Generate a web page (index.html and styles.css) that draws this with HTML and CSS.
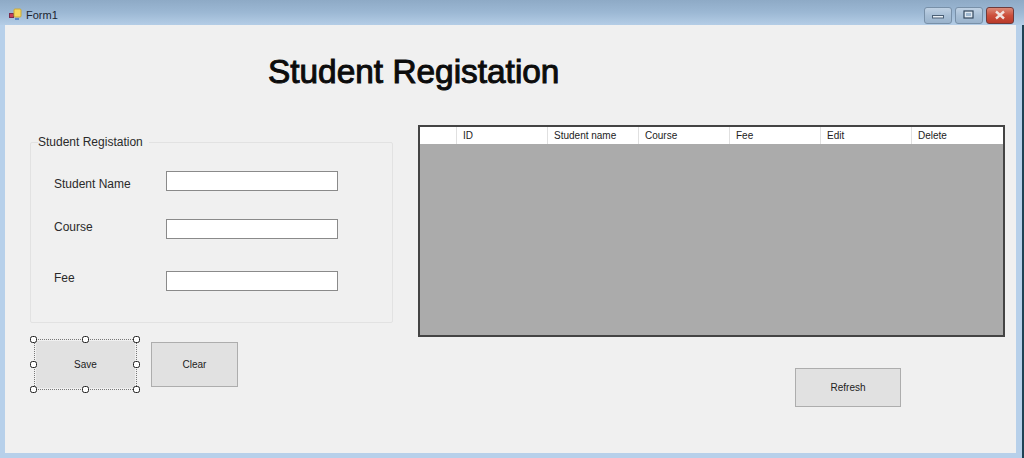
FILE: index.html
```html
<!DOCTYPE html>
<html lang="en">
<head>
<meta charset="utf-8">
<title>Form1</title>
<link rel="stylesheet" href="styles.css">
</head>
<body>
<div class="window">
  <header class="titlebar">
    <div class="title-left">
      <svg class="app-icon" width="16" height="16" viewBox="0 0 16 16">
        <rect x="1.5" y="6.5" width="4" height="4" fill="#c8405a" stroke="#7a2a4a" stroke-width="1"/>
        <rect x="6" y="2" width="7" height="8" rx="1" fill="#f6d860" stroke="#c9a83a" stroke-width="1"/>
        <path d="M7 11h4v2H7z" fill="#5a86c8"/>
      </svg>
      <span class="title-text">Form1</span>
    </div>
    <div class="controls">
      <div class="ctl">
        <svg width="14" height="8" viewBox="0 0 14 8"><rect x="1.5" y="4.5" width="11" height="2.5" fill="#e8eef4" stroke="#4a5f75"/></svg>
      </div>
      <div class="ctl">
        <svg width="12" height="10" viewBox="0 0 12 10"><rect x="1" y="1" width="9" height="7" fill="#dfe8f1" stroke="#33475c" stroke-width="1.2"/><rect x="3" y="3" width="5" height="3" fill="#9fb8d0"/></svg>
      </div>
      <div class="ctl ctl-close">
        <svg width="14" height="10" viewBox="0 0 14 10"><path d="M3 1.5 L11 8.5 M11 1.5 L3 8.5" stroke="#f1e2df" stroke-width="2.4" fill="none"/></svg>
      </div>
    </div>
  </header>

  <main class="client">
    <div class="heading"><h1 class="heading-text">Student Registation</h1></div>
    <div class="columns">
      <section class="left">
        <fieldset class="group">
          <legend class="group-title">Student Registation</legend>
          <div class="row row-name">
            <label class="lbl lbl-name">Student Name</label>
            <input class="field" type="text">
          </div>
          <div class="row row-course">
            <label class="lbl lbl-course">Course</label>
            <input class="field" type="text">
          </div>
          <div class="row row-fee">
            <label class="lbl">Fee</label>
            <input class="field" type="text">
          </div>
        </fieldset>
        <div class="actions">
          <div class="selected">
            <button class="btn btn-save" type="button">Save</button>
            <span class="handle h-tl"></span><span class="handle h-tc"></span><span class="handle h-tr"></span>
            <span class="handle h-ml"></span><span class="handle h-mr"></span>
            <span class="handle h-bl"></span><span class="handle h-bc"></span><span class="handle h-br"></span>
          </div>
          <button class="btn btn-clear" type="button">Clear</button>
        </div>
      </section>
      <section class="right">
        <div class="datagrid">
          <div class="grid-head">
            <div class="hcell hcell-corner"></div>
            <div class="hcell">ID</div>
            <div class="hcell">Student name</div>
            <div class="hcell">Course</div>
            <div class="hcell">Fee</div>
            <div class="hcell">Edit</div>
            <div class="hcell">Delete</div>
          </div>
        </div>
        <div class="refresh-row">
          <button class="btn btn-refresh" type="button">Refresh</button>
        </div>
      </section>
    </div>
  </main>
</div>
</body>
</html>
```

FILE: styles.css
```css
* { box-sizing: border-box; }
html, body { margin: 0; padding: 0; }
body { width: 1024px; height: 458px; overflow: hidden; font-family: "Liberation Sans", Arial, sans-serif; color: #222; }

.window {
  width: 1024px; height: 458px;
  display: flex; flex-direction: column;
  background: #b7d0ea;
  padding: 0 2px 5px 5px;
  position: relative;
  box-shadow: inset -2px 0 0 #1f4254;
}

.titlebar {
  height: 25px; margin: 0 -2px 0 -5px; padding: 0 10px 0 8px;
  display: flex; align-items: center; justify-content: space-between;
  background: linear-gradient(180deg, #8eaac6 0%, #9cb8d4 50%, #b4cde6 100%);
}
.title-left { display: flex; align-items: center; gap: 2px; margin-top: 5px; }
.app-icon { display: block; }
.title-text { font-size: 11px; color: #1c2530; font-family: "Liberation Sans", sans-serif; }
.controls { display: flex; gap: 3px; margin-top: 5px; }
.ctl {
  width: 28px; height: 17px;
  display: flex; align-items: center; justify-content: center;
  border: 1px solid #7890a8; border-radius: 3px;
  background: linear-gradient(180deg, #c0d2e4 0%, #a8bfd6 50%, #9ab3cc 100%);
}
.ctl-close {
  background: linear-gradient(180deg, #dc8a78 0%, #cc4f3c 50%, #b93a2a 100%);
  border-color: #6e3b3b;
}

.client {
  width: 1011px; height: 428px;
  background: #f0f0f0;
  flex: none;
}
.heading { height: 100px; padding: 28px 0 0 263px; }
.heading-text { margin: 0; font-size: 33.4px; line-height: 38px; font-weight: 400; color: #0c0c0c; -webkit-text-stroke: 1px #0c0c0c; white-space: nowrap; }

.columns { display: flex; padding-left: 25px; gap: 25px; align-items: flex-start; }
.left { width: 363px; padding-top: 10px; }
.group {
  margin: 0; padding: 0 0 0 23px;
  width: 363px; height: 188px;
  border: 1px solid #e2e2e2; border-radius: 2px;
}
.group-title { margin-left: -16px; padding: 0 6px 0 0; font-size: 12px; line-height: 14px; color: #2a2a2a; }

.row { display: flex; align-items: flex-start; }
.row-name { margin-top: 22px; }
.row-course { margin-top: 28px; }
.row-fee { margin-top: 32px; }
.lbl { width: 112px; font-size: 12px; line-height: 14px; color: #2a2a2a; }
.lbl-name { margin-top: 6px; }
.lbl-course { margin-top: 1px; }
.field { width: 172px; height: 20px; border: 1px solid #8a8a8a; background: #fff; padding: 0; margin: 0; }

.actions { display: flex; align-items: flex-start; margin-top: 18px; padding-left: 6px; gap: 16px; }
.selected { position: relative; width: 99px; height: 47px; }
.selected::before {
  content: ""; position: absolute; left: -2px; top: -2px; right: -2px; bottom: -2px;
  border: 1px dotted #777;
}
.btn {
  font-family: "Liberation Sans", sans-serif; font-size: 10px; color: #222;
  background: #e1e1e1; border: 1px solid #adadad; padding: 0;
  display: block;
}
.btn-save { width: 99px; height: 47px; position: relative; border-color: #e1e1e1; }
.btn-clear { width: 87px; height: 45px; margin-top: 1px; }
.btn-refresh { width: 106px; height: 39px; }

.handle {
  position: absolute; width: 7px; height: 7px;
  background: #fff; border: 1.5px solid #222; border-radius: 2.5px;
}
.h-tl { left: -6px; top: -5px; }
.h-tc { left: 46px; top: -5px; }
.h-tr { left: 97px; top: -5px; }
.h-ml { left: -6px; top: 20px; }
.h-mr { left: 97px; top: 20px; }
.h-bl { left: -6px; top: 45px; }
.h-bc { left: 46px; top: 45px; }
.h-br { left: 97px; top: 45px; }

.right { width: 587px; }
.datagrid { width: 587px; height: 212px; background: #ababab; border: 2px solid #444; }
.grid-head { display: grid; grid-template-columns: 37px repeat(5, 91px) 1fr; height: 17px; background: #fff; }
.hcell { font-size: 10px; line-height: 17px; padding-left: 6px; color: #222; border-right: 1px solid #e0e0e0; white-space: nowrap; }
.hcell:last-child { border-right: 0; }
.refresh-row { padding: 31px 0 0 377px; }
```
